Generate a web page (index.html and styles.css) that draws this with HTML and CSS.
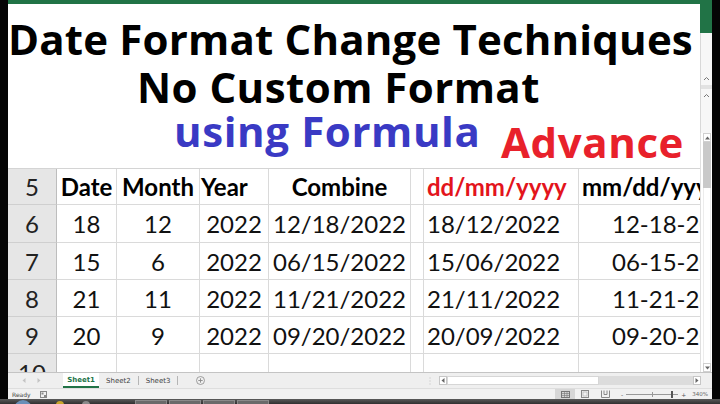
FILE: index.html
```html
<!DOCTYPE html>
<html>
<head>
<meta charset="utf-8">
<link rel="stylesheet" href="styles.css">
</head>
<body>
<div class="screen">
  <div class="edge"></div>
  <div class="excel">
    <div class="strip"></div>
    <div class="work">
      <div class="main">
        <div class="title">
          <div class="t1">Date Format Change Techniques</div>
          <div class="t2">No Custom Format</div>
          <div class="t3"><span class="formula">using Formula</span><span class="advance">Advance</span></div>
        </div>
        <div class="sheet">
          <div class="c rh">5</div><div class="c h ctr">Date</div><div class="c h ctr">Month</div><div class="c h yr">Year</div><div class="c h ctr">Combine</div><div class="c"></div><div class="c h l red">dd/mm/yyyy</div><div class="c h l">mm/dd/yyyy</div>
          <div class="c rh">6</div><div class="c ctr">18</div><div class="c ctr">12</div><div class="c ctr">2022</div><div class="c ctr">12/18/2022</div><div class="c"></div><div class="c l">18/12/2022</div><div class="c far">12-18-2022</div>
          <div class="c rh">7</div><div class="c ctr">15</div><div class="c ctr">6</div><div class="c ctr">2022</div><div class="c ctr">06/15/2022</div><div class="c"></div><div class="c l">15/06/2022</div><div class="c far">06-15-2022</div>
          <div class="c rh">8</div><div class="c ctr">21</div><div class="c ctr">11</div><div class="c ctr">2022</div><div class="c ctr">11/21/2022</div><div class="c"></div><div class="c l">21/11/2022</div><div class="c far">11-21-2022</div>
          <div class="c rh">9</div><div class="c ctr">20</div><div class="c ctr">9</div><div class="c ctr">2022</div><div class="c ctr">09/20/2022</div><div class="c"></div><div class="c l">20/09/2022</div><div class="c far">09-20-2022</div>
          <div class="c rh last">10</div><div class="c last"></div><div class="c last"></div><div class="c last"></div><div class="c last"></div><div class="c last"></div><div class="c last"></div><div class="c last"></div>
        </div>
      </div>
      <div class="side">
        <div class="side-green"></div>
        <div class="side-light">
          <svg class="chev c1" width="7" height="5" viewBox="0 0 7 5"><path d="M1 4 L3.5 1.5 L6 4" fill="none" stroke="#777" stroke-width="1"/></svg>
          <div class="side-band"></div>
          <svg class="chev c2" width="7" height="5" viewBox="0 0 7 5"><path d="M1 4 L3.5 1.5 L6 4" fill="none" stroke="#777" stroke-width="1"/></svg>
        </div>
        <div class="vscroll">
          <div class="arrow-box"><svg width="5" height="4" viewBox="0 0 5 4"><path d="M0 3.5 L2.5 0.5 L5 3.5Z" fill="#666"/></svg></div>
          <div class="vtrack"></div>
          <div class="vthumb"></div>
          <div class="arrow-box"><svg width="5" height="4" viewBox="0 0 5 4"><path d="M0 0.5 L2.5 3.5 L5 0.5Z" fill="#666"/></svg></div>
        </div>
      </div>
    </div>
    <div class="tabbar">
      <div class="nav">
        <svg width="4" height="5" viewBox="0 0 4 5"><path d="M3.5 0 L0.5 2.5 L3.5 5Z" fill="#c4c4c4"/></svg>
        <svg width="4" height="5" viewBox="0 0 4 5"><path d="M0.5 0 L3.5 2.5 L0.5 5Z" fill="#c4c4c4"/></svg>
      </div>
      <div class="tab active">Sheet1</div>
      <div class="tab">Sheet2</div>
      <div class="sep"></div>
      <div class="tab">Sheet3</div>
      <div class="sep"></div>
      <div class="plus"><svg width="9" height="9" viewBox="0 0 9 9"><circle cx="4.5" cy="4.5" r="4" fill="none" stroke="#8a8a8a" stroke-width="0.8"/><path d="M4.5 2.3V6.7M2.3 4.5H6.7" stroke="#8a8a8a" stroke-width="0.9"/></svg></div>
      <div class="hscroll">
        <svg class="grip" width="2" height="8" viewBox="0 0 2 8"><path d="M1 0.5V1.5M1 3.5V4.5M1 6.5V7.5" stroke="#bdbdbd" stroke-width="1"/></svg>
        <div class="hbar">
          <div class="harrow"><svg width="4" height="5" viewBox="0 0 4 5"><path d="M3.5 0 L0.5 2.5 L3.5 5Z" fill="#666"/></svg></div>
          <div class="hthumb"></div>
          <div class="htrack"></div>
          <div class="harrow"><svg width="4" height="5" viewBox="0 0 4 5"><path d="M0.5 0 L3.5 2.5 L0.5 5Z" fill="#666"/></svg></div>
        </div>
      </div>
    </div>
    <div class="status">
      <span class="ready">Ready</span>
      <svg class="macro" width="7" height="7" viewBox="0 0 7 7"><rect x="0.5" y="0.5" width="6" height="6" fill="none" stroke="#888"/><rect x="1.5" y="1.5" width="2" height="2" fill="#888"/><rect x="4" y="4" width="2" height="2" fill="#888"/></svg>
      <div class="views">
        <div class="vbtn on"><svg width="9" height="7" viewBox="0 0 9 7"><rect x="0.5" y="0.5" width="8" height="6" fill="none" stroke="#777"/><path d="M0.5 2.5H8.5M0.5 4.5H8.5M3.5 0.5V6.5M6 0.5V6.5" stroke="#777" stroke-width="0.6"/></svg></div>
        <div class="vbtn"><svg width="8" height="8" viewBox="0 0 8 8"><rect x="0.5" y="0.5" width="7" height="7" fill="none" stroke="#888"/><rect x="2" y="2" width="4" height="4" fill="none" stroke="#aaa" stroke-width="0.6"/></svg></div>
        <div class="vbtn"><svg width="9" height="8" viewBox="0 0 9 8"><path d="M0.5 0.5V7.5H8.5V0.5M3 0.5V4.5H6V0.5" fill="none" stroke="#888"/></svg></div>
        <div class="zoomer">
          <span class="zm">-</span>
          <div class="slider"><div class="tick"></div><div class="knob"></div></div>
          <span class="zp">+</span>
          <span class="pct">340%</span>
        </div>
      </div>
    </div>
  </div>
  <div class="edge"></div>
  <div class="taskbar">
    <div class="orb"></div>
    <div class="ticon yellow"></div>
    <div class="ticon grey"></div>
    <div class="tbtn first"></div>
    <div class="tbtn"></div>
    <div class="tbtn"></div>
    <div class="tbtn"></div>
  </div>
</div>
</body>
</html>
```

FILE: styles.css
```css
* { box-sizing: border-box; margin: 0; padding: 0; }
html, body { width: 720px; height: 404px; overflow: hidden; background: #000; }
body { font-family: "Lato", "Open Sans", sans-serif; }

.screen {
  display: grid;
  grid-template-columns: 8px 704px 8px;
  grid-template-rows: 399px 5px;
  width: 720px;
  height: 404px;
}
.edge { background: #050505; }

.excel { display: flex; flex-direction: column; background: #fff; }
.strip { height: 4px; background: #217346; }
.work { display: flex; height: 368px; }
.main { width: 692px; display: flex; flex-direction: column; }

/* Title */
.title {
  height: 164px;
  padding-top: 11px;
  font-family: "Open Sans", "Lato", sans-serif;
  font-weight: 700;
  font-size: 42px;
  letter-spacing: 0.6px;
  color: #000;
  white-space: nowrap;
}
.t1 { height: 48px; line-height: 48px; letter-spacing: 0.18px; }
.t2 { height: 48px; line-height: 48px; padding-left: 129px; letter-spacing: 0.45px; }
.t3 { display: flex; align-items: flex-start; padding-left: 166px; padding-right: 16px; }
.formula { line-height: 40px; color: #3a3ac4; }
.advance { line-height: 40px; margin-top: 11px; margin-left: auto; color: #e8212b; }

/* Sheet */
.sheet {
  height: 204px;
  display: grid;
  grid-template-columns: 49px 60px 83px 69px 142px 13px 155px 121px;
  grid-template-rows: 36px 38px 37px 37px 37px 18px;
  border-top: 1px solid #d4d4d4;
  font-family: "Lato", sans-serif;
  font-size: 24px;
  color: #111;
  background: #fff;
}
.c {
  display: flex;
  align-items: center;
  border-right: 1px solid #dadada;
  border-bottom: 1px solid #dadada;
  overflow: hidden;
  white-space: nowrap;
}
.c:nth-child(8n) { border-right: none; }
.c.last { border-bottom: none; align-items: flex-start; padding-top: 4px; }
.rh {
  justify-content: center;
  background: #e6e6e6;
  border-right-color: #bdbdbd;
  border-bottom-color: #cfcfcf;
  color: #222;
}
.h { font-weight: 700; color: #000; }
.ctr { justify-content: center; }
.yr { padding-left: 1px; }
.l { padding-left: 3px; }
.far { padding-left: 33px; }
.red { color: #e3141c; }

/* Side column */
.side { width: 12px; display: flex; flex-direction: column; background: #fff; }
.side-green { height: 29px; background: #217346; }
.side-light {
  height: 100px;
  background: #f7f7f7;
  display: flex;
  flex-direction: column;
  align-items: center;
  border-left: 1px solid #d8d8d8;
}
.chev.c1 { margin-top: 43px; }
.side-band { width: 100%; height: 4px; background: #e2e2e2; margin-top: 4px; }
.chev.c2 { margin-top: 4px; }
.vscroll { flex: 1; display: flex; flex-direction: column; align-items: center; padding-left: 1px; background: #fff; border-left: 1px solid #e0e0e0; }
.arrow-box {
  width: 8px; height: 9px;
  border: 1px solid #d0d0d0;
  background: #fff;
  display: flex; align-items: center; justify-content: center;
}
.vtrack { width: 8px; height: 46px; background: #c9c9c9; }
.vthumb { width: 8px; flex: 1; background: #fff; border-left: 1px solid #ececec; border-right: 1px solid #ececec; }

/* Tab bar */
.tabbar {
  height: 16px;
  background: #efefef;
  border-top: 1px solid #c4c4c4;
  display: flex;
  align-items: stretch;
  font-family: "DejaVu Sans", sans-serif;
  font-size: 7px;
  color: #444;
}
.nav { width: 55px; display: flex; align-items: center; gap: 11px; padding-left: 14px; }
.tab { padding: 0 7px; display: flex; align-items: center; }
.tab.active {
  width: 36px;
  justify-content: center;
  background: #fff;
  color: #217346;
  font-weight: 700;
  border-bottom: 2px solid #217346;
}
.sep { width: 1px; background: #b5b5b5; margin: 3px 0; }
.plus { margin-left: 18px; display: flex; align-items: center; }
.hscroll { margin-left: auto; display: flex; align-items: center; padding-right: 11px; }
.grip { margin-right: 8px; }
.hbar { width: 262px; height: 9px; display: flex; }
.harrow { width: 8px; height: 9px; border: 1px solid #c6c6c6; background: #fff; display: flex; align-items: center; justify-content: center; }
.hthumb { width: 152px; background: #fff; border: 1px solid #d6d6d6; }
.htrack { flex: 1; background: #dcdcdc; }

/* Status bar */
.status {
  height: 11px;
  background: #f1f1f1;
  border-top: 1px solid #dedede;
  display: flex;
  align-items: center;
  font-family: "DejaVu Sans", sans-serif;
  font-size: 6px;
  color: #444;
  padding-left: 4px;
}
.ready { width: 28px; }
.views { margin-left: auto; display: flex; align-items: center; height: 100%; padding-right: 4px; }
.vbtn { width: 20px; height: 10px; display: flex; align-items: center; justify-content: center; }
.vbtn.on { background: #d6d6d6; }
.zoomer { display: flex; align-items: center; margin-left: 6px; gap: 3px; color: #555; }
.slider { position: relative; width: 52px; height: 1px; background: #999; }
.tick { position: absolute; left: 26px; top: -2px; width: 1px; height: 5px; background: #999; }
.knob { position: absolute; left: 45px; top: -3px; width: 2px; height: 7px; background: #555; }
.pct { font-size: 5.5px; margin-left: 3px; color: #666; }

/* Taskbar */
.taskbar {
  grid-column: 1 / 4;
  background: linear-gradient(#5a5a5a, #303030);
  display: flex;
  align-items: flex-start;
  overflow: hidden;
}
.orb { width: 18px; height: 18px; border-radius: 50%; background: #6a8fb8; margin-left: 14px; margin-top: 1px; }
.ticon { width: 8px; height: 8px; border-radius: 50%; margin-top: 2px; }
.ticon.yellow { background: #c9a52a; margin-left: 24px; }
.ticon.grey { background: #8a8a8a; margin-left: 18px; }
.tbtn { width: 32px; height: 8px; margin-top: 1px; margin-left: 2px; background: #6a6a6a; border: 1px solid #8a8a8a; }
.tbtn.first { margin-left: 45px; }
```
